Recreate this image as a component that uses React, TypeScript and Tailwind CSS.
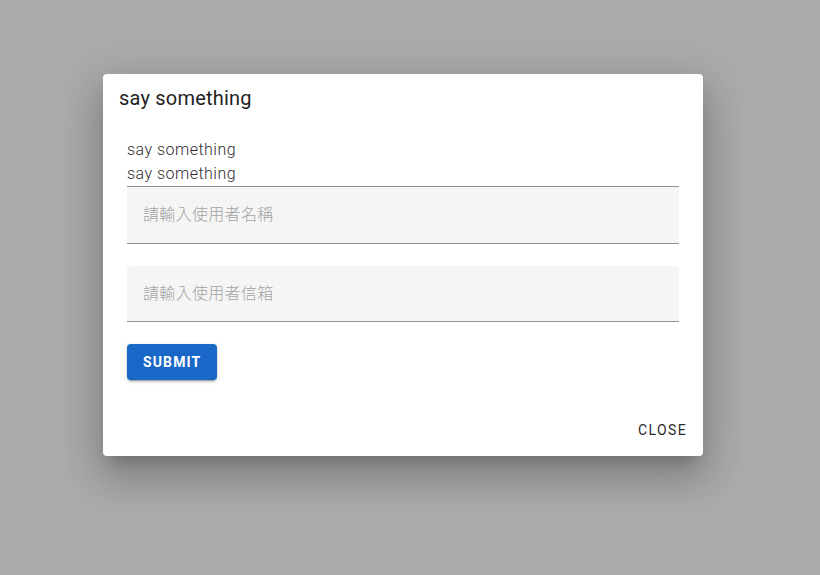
const FONT = { fontFamily: 'Roboto, "Noto Sans CJK TC", sans-serif' }

function FilledField({ placeholder, topLine }: { placeholder: string; topLine?: boolean }) {
  return (
    <div
      className={
        'bg-[#f5f5f5] border-b border-[#949494] flex items-center px-4 ' +
        (topLine ? 'h-[58px] border-t border-t-[#8f8f8f]' : 'h-14 rounded-t')
      }
    >
      <input
        className="w-full bg-transparent outline-none text-base font-light text-[#333] placeholder:text-[#a3a3a3] tracking-[0.02em]"
        placeholder={placeholder}
        style={FONT}
      />
    </div>
  )
}

export default function App() {
  return (
    <div className="w-[820px] h-[575px] bg-[#ababab] flex items-start pl-[103px] pt-[74px]" style={FONT}>
      <div className="w-[600px] h-[382px] bg-white rounded flex flex-col shadow-[0_11px_15px_-7px_rgba(0,0,0,0.2),0_24px_38px_3px_rgba(0,0,0,0.14),0_9px_46px_8px_rgba(0,0,0,0.12)]">
        {/* Title */}
        <h2 className="px-4 pt-2 text-[20px] leading-8 font-normal text-[#1f1f1f] tracking-[0.01em]">
          say something
        </h2>

        {/* Content */}
        <div className="px-6 pt-[24px] flex-1 flex flex-col">
          <p className="text-base leading-6 font-light text-[#2e2e2e] tracking-[0.03em]">say something</p>
          <p className="text-base leading-6 font-light text-[#2e2e2e] tracking-[0.03em]">say something</p>
          <FilledField placeholder="請輸入使用者名稱" topLine />
          <div className="h-[22px]" />
          <FilledField placeholder="請輸入使用者信箱" />
          <div className="pt-[22px]">
            <button className="h-9 px-4 rounded bg-[#1967c7] text-white text-sm font-bold tracking-[0.08em] shadow-[0_3px_1px_-2px_rgba(0,0,0,0.2),0_2px_2px_0_rgba(0,0,0,0.14),0_1px_5px_0_rgba(0,0,0,0.12)]">
              SUBMIT
            </button>
          </div>
        </div>

        {/* Actions */}
        <div className="flex justify-end p-2">
          <button className="h-9 px-2 rounded text-sm font-normal text-[#2b2b2b] tracking-[0.1em]">
            CLOSE
          </button>
        </div>
      </div>
    </div>
  )
}
